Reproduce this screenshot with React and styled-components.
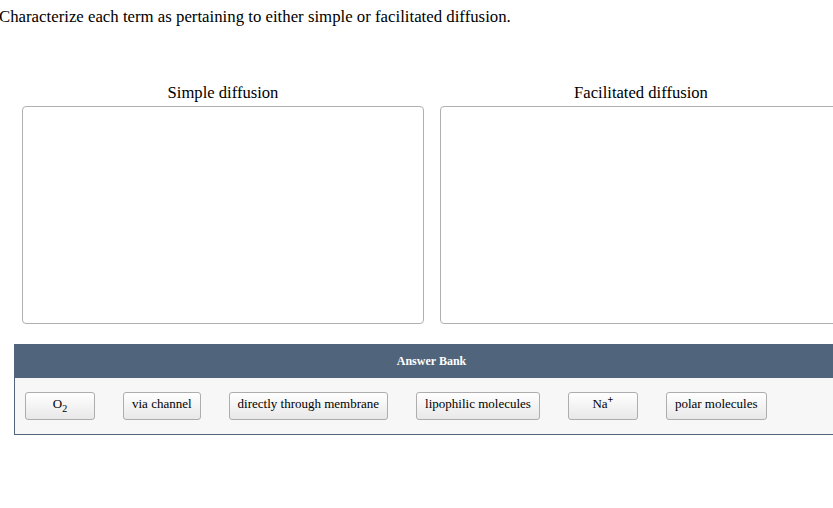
import styled, { createGlobalStyle } from 'styled-components'

const GlobalStyle = createGlobalStyle`
    html, body {
        margin: 0;
        padding: 0;
        background: #ffffff;
        overflow: hidden;
    }
    body {
        font-family: "Liberation Serif", "Times New Roman", serif;
        color: #000;
    }
`;

const terms = [
    { key: 'o2', label: <>O<sub>2</sub></>, wide: true },
    { key: 'channel', label: 'via channel' },
    { key: 'membrane', label: 'directly through membrane' },
    { key: 'lipo', label: 'lipophilic molecules' },
    { key: 'na', label: <>Na<sup>+</sup></>, wide: true },
    { key: 'polar', label: 'polar molecules' },
]

const App = () => {
    return (
        <Page>
            <GlobalStyle />
            <Prompt>Characterize each term as pertaining to either simple or facilitated diffusion.</Prompt>

            <Columns>
                <Column>
                    <BinTitle>Simple diffusion</BinTitle>
                    <Bin />
                </Column>
                <Column>
                    <BinTitle>Facilitated diffusion</BinTitle>
                    <Bin />
                </Column>
            </Columns>

            <Bank>
                <BankHeader>Answer Bank</BankHeader>
                <BankBody>
                    {terms.map(t => (
                        <Term key={t.key} $wide={t.wide}>{t.label}</Term>
                    ))}
                </BankBody>
            </Bank>
        </Page>
    )
}

const Page = styled.div`
    width: 860px;
    padding-top: 8px;
`;

const Prompt = styled.p`
    margin: 0;
    font-size: 16.8px;
    line-height: 18px;
    text-indent: -1px;
`;

const Columns = styled.div`
    display: grid;
    grid-template-columns: 402px 402px;
    column-gap: 16px;
    padding-left: 22px;
    margin-top: 58px;
`;

const Column = styled.div`
    display: flex;
    flex-direction: column;
    align-items: stretch;
`;

const BinTitle = styled.h3`
    margin: 0 0 4px 0;
    font-size: 16.6px;
    font-weight: normal;
    line-height: 18px;
    text-align: center;
`;

const Bin = styled.div`
    height: 216px;
    border: 1px solid #b0b0b0;
    border-radius: 4px;
    background: #fff;
`;

const Bank = styled.div`
    margin: 20px 0 0 14px;
    border-left: 1px solid #50657c;
    border-bottom: 1px solid #50657c;
`;

const BankHeader = styled.div`
    height: 34px;
    background: #50657c;
    color: #fff;
    font-size: 12px;
    font-weight: bold;
    line-height: 34px;
    text-align: center;
    padding-right: 12px;
`;

const BankBody = styled.div`
    display: flex;
    flex-wrap: wrap;
    align-items: center;
    background: #f7f7f7;
    padding: 14px 0 14px 0;
`;

const Term = styled.div`
    box-sizing: border-box;
    height: 28px;
    min-width: ${p => (p.$wide ? '70px' : 'auto')};
    margin: 0 14px 0 10px;
    padding: 0 8px;
    border: 1px solid #adadad;
    border-radius: 3px;
    background: linear-gradient(#ffffff, #e8e8e8);
    font-size: 13px;
    line-height: 22px;
    text-align: center;
    color: #000;
    & + & {
        margin-left: 14px;
    }
    sub, sup {
        font-size: 10px;
        line-height: 0;
    }
    sup {
        font-weight: bold;
    }
`;

export default App;
